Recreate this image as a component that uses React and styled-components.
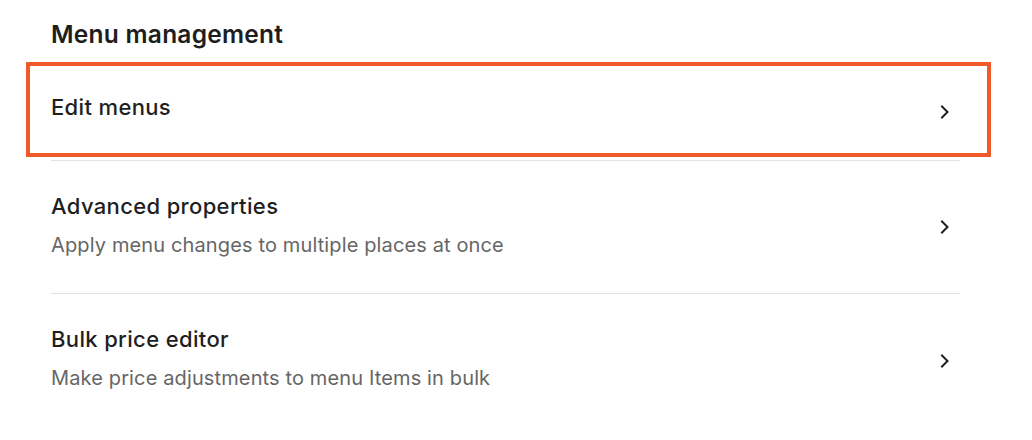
import React from 'react'
import styled, { createGlobalStyle } from 'styled-components'

const GlobalStyle = createGlobalStyle`
  html, body {
    margin: 0;
    padding: 0;
    background: #fff;
  }
  body {
    font-family: Inter, "Noto Sans", sans-serif;
    color: #202020;
    -webkit-font-smoothing: antialiased;
  }
`;

const Page = styled.div`
  width: 1032px;
  height: 440px;
  box-sizing: border-box;
  padding: 17px 72px 0 51px;
  overflow: hidden;
`;

const Heading = styled.h2`
  margin: 0;
  font-size: 24.5px;
  line-height: 34px;
  font-weight: 600;
  letter-spacing: 0.25px;
  color: #1e1e1e;
`;

const List = styled.div`
  display: flex;
  flex-direction: column;
  margin-top: 13px;
`;

const Row = styled.div`
  position: relative;
  display: flex;
  align-items: center;
  justify-content: space-between;
  height: ${props => props.$height}px;
  box-sizing: border-box;
  border-bottom: ${props => (props.$last ? 'none' : '1px solid #e2e2e2')};
  cursor: pointer;

  ${props => props.$highlighted && `
    &::after {
      content: '';
      position: absolute;
      top: -2px;
      bottom: 3px;
      left: -25px;
      right: -31px;
      border: 4.5px solid #f05a28;
      pointer-events: none;
    }
  `}
`;

const Text = styled.div`
  display: flex;
  flex-direction: column;
  gap: 10px;
  padding-bottom: ${props => props.$lift}px;
`;

const Title = styled.div`
  font-size: 22px;
  line-height: 30px;
  font-weight: 500;
  letter-spacing: 0.35px;
  color: #1f1f1f;
`;

const Subtitle = styled.div`
  font-size: 20px;
  line-height: 28px;
  font-weight: 400;
  letter-spacing: 0.13px;
  color: #666;
`;

const Chevron = styled.svg`
  flex: none;
  width: 10px;
  height: 14px;
  margin-right: 10px;
`;

const ChevronIcon = () => (
  <Chevron viewBox="0 0 10 14" fill="none">
    <polyline points="2,1.5 7.5,7 2,12.5" stroke="#1f1f1f" strokeWidth="2" strokeLinecap="square" />
  </Chevron>
)

const items = [
  { title: 'Edit menus', height: 97, lift: 10 },
  { title: 'Advanced properties', sub: 'Apply menu changes to multiple places at once', height: 133, lift: 5 },
  { title: 'Bulk price editor', sub: 'Make price adjustments to menu Items in bulk', height: 133, lift: 5 },
]

export default function App() {
  return (
    <>
      <GlobalStyle />
      <Page>
        <Heading>Menu management</Heading>
        <List>
          {items.map((item, i) => (
            <Row
              key={item.title}
              $last={i === items.length - 1}
              $highlighted={i === 0}
              $height={item.height}
            >
              <Text $lift={item.lift}>
                <Title>{item.title}</Title>
                {item.sub && <Subtitle>{item.sub}</Subtitle>}
              </Text>
              <ChevronIcon />
            </Row>
          ))}
        </List>
      </Page>
    </>
  )
}
